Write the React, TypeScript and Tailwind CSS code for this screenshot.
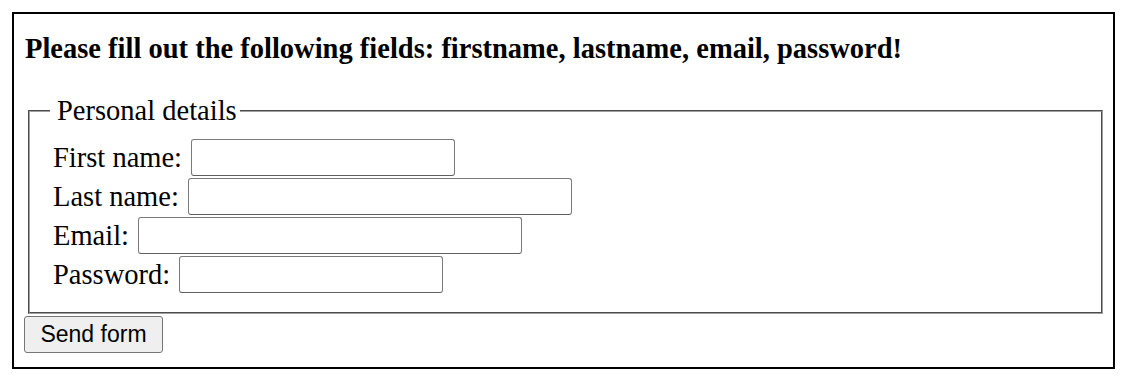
import React from 'react';

const serif = { fontFamily: '"Liberation Serif", "Times New Roman", serif' };

const fields = [
  { label: 'First name:', type: 'text', width: 'w-[264px]' },
  { label: 'Last name:', type: 'text', width: 'w-[384px]' },
  { label: 'Email:', type: 'email', width: 'w-[384px]' },
  { label: 'Password:', type: 'password', width: 'w-[264px]' },
];

const App: React.FC = () => {
  return (
    <div className="bg-white w-[1127px] h-[386px] pt-[12px] pl-[12px]" style={serif}>
      <div className="w-[1103px] h-[357px] border-2 border-black px-[10px] text-black">
        {/* Heading */}
        <p className="ml-[1px] mt-[19px] text-[28.5px] leading-[32px] font-bold">
          Please fill out the following fields: firstname, lastname, email, password!
        </p>

        {/* Personal details */}
        <fieldset className="ml-[4px] mt-[30px] border-2 border-[#a0a0a0] [border-style:groove] pl-[23px] pt-[11px] pb-[18px]">
          <legend className="-ml-[3px] pl-[7px] pr-[3px] text-[28.5px] leading-[32px]">Personal details</legend>
          {fields.map((f) => (
            <div key={f.label} className="flex items-center h-[39px] text-[28.5px] leading-[32px]">
              <span>{f.label}</span>
              <input
                type={f.type}
                className={`${f.width} h-[37px] ml-[9px] bg-white border border-[#7a7a7a] border-b-[#5f5f5f] rounded-[3px]`}
              />
            </div>
          ))}
        </fieldset>

        <button
          type="button"
          className="mt-[2px] w-[139px] h-[37px] bg-[#efefef] border border-[#767676] rounded-[3px] text-[23px] text-black"
          style={{ fontFamily: '"Liberation Sans", Arial, sans-serif' }}
        >
          Send form
        </button>
      </div>
    </div>
  );
};

export default App;
